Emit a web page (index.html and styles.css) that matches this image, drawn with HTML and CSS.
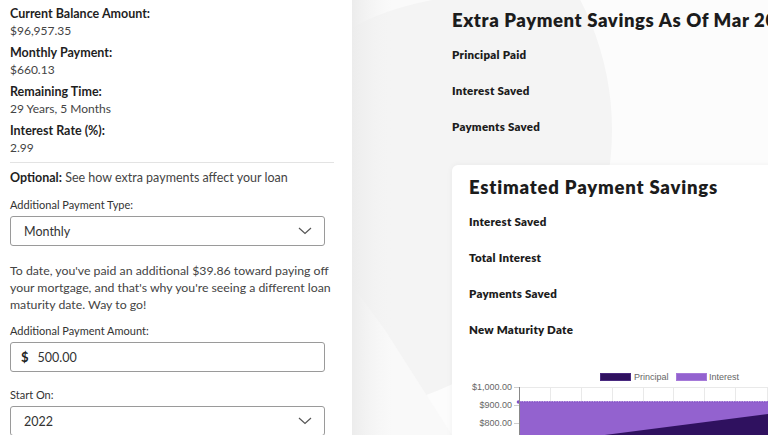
FILE: index.html
```html
<!DOCTYPE html>
<html>
<head>
<meta charset="utf-8">
<link rel="stylesheet" href="styles.css">
</head>
<body>
<div class="page">
  <aside class="left">
    <div class="info">
      <div class="info-label">Current Balance Amount:</div>
      <div class="info-value">$96,957.35</div>
    </div>
    <div class="info">
      <div class="info-label">Monthly Payment:</div>
      <div class="info-value">$660.13</div>
    </div>
    <div class="info">
      <div class="info-label">Remaining Time:</div>
      <div class="info-value">29 Years, 5 Months</div>
    </div>
    <div class="info">
      <div class="info-label">Interest Rate (%):</div>
      <div class="info-value">2.99</div>
    </div>
    <hr class="divider">
    <p class="optional"><b>Optional:</b> See how extra payments affect your loan</p>
    <div class="field">
      <div class="field-label">Additional Payment Type:</div>
      <div class="select"><span>Monthly</span>
        <svg class="chev" width="14" height="8" viewBox="0 0 14 8"><path d="M1 1 L7 6.5 L13 1" fill="none" stroke="#555" stroke-width="1.2"/></svg>
      </div>
    </div>
    <p class="note">To date, you've paid an additional $39.86 toward paying off your mortgage, and that's why you're seeing a different loan maturity date. Way to go!</p>
    <div class="field field-amount">
      <div class="field-label">Additional Payment Amount:</div>
      <div class="input"><b class="dollar">$</b><span>500.00</span></div>
    </div>
    <div class="field field-start">
      <div class="field-label">Start On:</div>
      <div class="select"><span>2022</span>
        <svg class="chev" width="14" height="8" viewBox="0 0 14 8"><path d="M1 1 L7 6.5 L13 1" fill="none" stroke="#555" stroke-width="1.2"/></svg>
      </div>
    </div>
  </aside>
  <main class="right">
    <svg class="watermark" width="416" height="435" viewBox="0 0 416 435">
      <defs>
        <linearGradient id="edge" x1="0" y1="0" x2="1" y2="0">
          <stop offset="0" stop-color="#ececec"/>
          <stop offset="1" stop-color="#f4f4f4" stop-opacity="0"/>
        </linearGradient>
      </defs>
      <rect width="416" height="435" fill="#fcfcfc"/>
      <circle cx="-22" cy="130" r="282" fill="#f4f4f4"/>
      <path d="M0 0 L80 0 Q30 10 0 28 Z" fill="#fafafa"/>
      <path d="M0 285 L33 330 L100 435 L0 435 Z" fill="#f9f9f9"/>
      <rect width="40" height="435" fill="url(#edge)"/>
    </svg>
    <div class="content">
      <h2 class="title">Extra Payment Savings As Of Mar 2022</h2>
      <div class="stat">Principal Paid</div>
      <div class="stat">Interest Saved</div>
      <div class="stat">Payments Saved</div>
      <section class="card">
        <h3 class="card-title">Estimated Payment Savings</h3>
        <div class="stat">Interest Saved</div>
        <div class="stat">Total Interest</div>
        <div class="stat">Payments Saved</div>
        <div class="stat">New Maturity Date</div>
        <svg class="chart" width="340" height="120" viewBox="0 0 340 120">
          <rect x="148.5" y="25.5" width="30" height="7" fill="#2f115f" stroke="#4a2a80" stroke-width="1"/>
          <text x="182" y="32" class="legend">Principal</text>
          <rect x="224.5" y="25.5" width="30" height="7" fill="#9362cf" stroke="#a67ad9" stroke-width="1"/>
          <text x="257" y="32" class="legend">Interest</text>
          <g stroke="#e9e9e9" stroke-width="1">
            <line x1="67" y1="39.5" x2="340" y2="39.5"/>
            <line x1="98.5" y1="39" x2="98.5" y2="120"/>
            <line x1="129.5" y1="39" x2="129.5" y2="120"/>
            <line x1="160.5" y1="39" x2="160.5" y2="120"/>
            <line x1="191.5" y1="39" x2="191.5" y2="120"/>
            <line x1="221.5" y1="39" x2="221.5" y2="120"/>
            <line x1="252.5" y1="39" x2="252.5" y2="120"/>
            <line x1="283.5" y1="39" x2="283.5" y2="120"/>
            <line x1="315.5" y1="39" x2="315.5" y2="120"/>
          </g>
          <g stroke="#cfcfcf" stroke-width="1">
            <line x1="62" y1="39.5" x2="67" y2="39.5"/>
            <line x1="62" y1="57.5" x2="67" y2="57.5"/>
            <line x1="62" y1="75.5" x2="67" y2="75.5"/>
          </g>
          <rect x="67" y="53.5" width="273" height="70" fill="#9362cf"/>
          <line x1="67" y1="53.8" x2="340" y2="53.8" stroke="#8352c6" stroke-width="1.2" stroke-dasharray="1.5 1"/>
          <polygon points="67,98 340,63 340,120 67,120" fill="#2f115f"/>
          <circle cx="66.5" cy="54" r="1.8" fill="#8352c6"/>
          <line x1="67.5" y1="39" x2="67.5" y2="120" stroke="#888" stroke-width="1"/>
          <text x="60" y="42" class="tick">$1,000.00</text>
          <text x="60" y="60" class="tick">$900.00</text>
          <text x="60" y="78" class="tick">$800.00</text>
        </svg>
      </section>
    </div>
  </main>
</div>
</body>
</html>
```

FILE: styles.css
```css
* { box-sizing: border-box; }
html, body { margin: 0; padding: 0; }
body {
  width: 768px;
  height: 435px;
  overflow: hidden;
  font-family: "Lato", "Noto Sans", sans-serif;
  color: #222;
  background: #fff;
}
.page {
  display: flex;
  height: 435px;
}
.left {
  width: 352px;
  flex: none;
  padding: 6px 18px 0 10px;
  background: #fff;
}
.info {
  margin-bottom: 6px;
}
.info-label {
  font-weight: 700;
  font-size: 12.5px;
  line-height: 16px;
  color: #1f1f1f;
}
.info-value {
  font-size: 12px;
  line-height: 16px;
  color: #444;
  margin-top: 1px;
}
.divider {
  border: none;
  border-top: 1px solid #e3e3e3;
  margin: 5px 0 0 0;
}
.optional {
  margin: 7px 0 0 0;
  font-size: 12.5px;
  line-height: 16px;
  color: #444;
}
.optional b {
  color: #1f1f1f;
}
.field {
  margin-top: 12px;
}
.field-label {
  font-size: 11px;
  line-height: 14px;
  color: #333;
  margin-bottom: 4px;
}
.select, .input {
  width: 315px;
  height: 30px;
  border: 1px solid #9a9a9a;
  border-radius: 3px;
  display: flex;
  align-items: center;
  padding: 0 12px 0 13px;
  font-size: 12.5px;
  color: #333;
  background: #fff;
}
.select {
  justify-content: space-between;
}
.input {
  padding-left: 10px;
}
.dollar {
  font-weight: 700;
  color: #222;
  margin-right: 9px;
  font-size: 13px;
}
.note {
  margin: 16px -8px 0 0;
  font-size: 12.3px;
  line-height: 17px;
  color: #444;
}
.field-amount {
  margin-top: 11px;
}
.field-start {
  margin-top: 16px;
}

.right {
  flex: 1;
  position: relative;
  overflow: hidden;
  background: #f6f6f6;
}
.watermark {
  position: absolute;
  left: 0;
  top: 0;
}
.content {
  position: relative;
  padding-left: 100px;
}
.title {
  margin: 0;
  padding-top: 9px;
  height: 37px;
  font-size: 18.5px;
  line-height: 22px;
  font-weight: 800;
  white-space: nowrap;
  color: #1c1c1c;
  letter-spacing: 0.6px;
}
.stat {
  height: 36px;
  line-height: 36px;
  font-size: 11.5px;
  font-weight: 800;
  color: #1c1c1c;
  letter-spacing: 0.25px;
}
.card {
  margin-top: 20px;
  width: 340px;
  height: 300px;
  background: #fff;
  border-radius: 6px 0 0 0;
  padding: 11px 0 0 17px;
  box-shadow: 0 0 6px rgba(0,0,0,0.05);
}
.card-title {
  margin: 0 0 6px 0;
  font-size: 18.5px;
  line-height: 22px;
  font-weight: 800;
  color: #1c1c1c;
  white-space: nowrap;
  letter-spacing: 0.8px;
}
.chart {
  display: block;
  margin-left: -17px;
}
.legend {
  font-family: "Liberation Sans", Arial, sans-serif;
  font-size: 9px;
  fill: #666;
}
.tick {
  font-family: "Liberation Sans", Arial, sans-serif;
  font-size: 9px;
  fill: #666;
  text-anchor: end;
}
```
